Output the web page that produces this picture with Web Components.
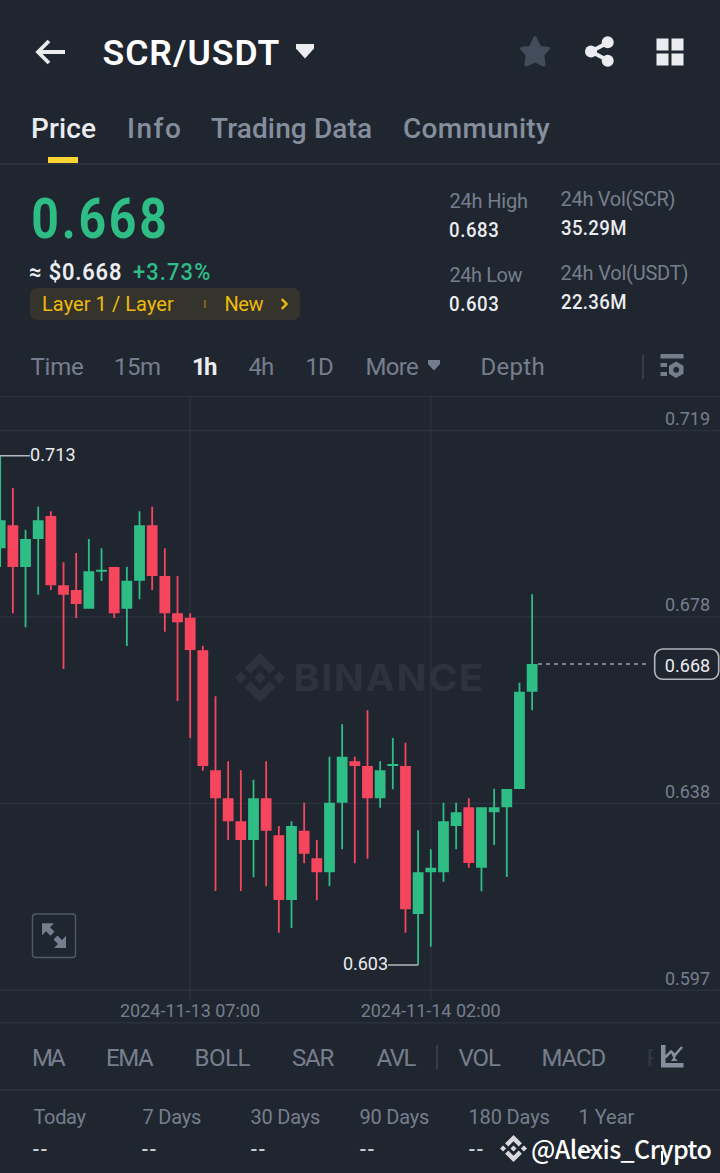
<!DOCTYPE html>
<html lang="en">
<head>
<meta charset="utf-8">
<title>SCR/USDT</title>
<style>
  body {
    margin: 0;
    width: 720px;
    height: 1173px;
    overflow: hidden;
    background: #202630;
    --text: #eaecef;
    --tab: #848e9c;
    --muted: #767e8d;
    --line: #2b303b;
    --up: #2ebd85;
    --down: #f6465d;
    --yellow: #f0b90b;
    font-family: Roboto, "Liberation Sans", sans-serif;
    color: var(--text);
  }
</style>
</head>
<body>
<market-page></market-page>

<script>
const make = (name, html, setup) => {
  const template = document.createElement('template');
  template.innerHTML = html;
  customElements.define(name, class extends HTMLElement {
    constructor() {
      super();
      this.attachShadow({ mode: 'open' });
      this.shadowRoot.appendChild(template.content.cloneNode(true));
    }
    connectedCallback() {
      if (setup) setup(this, this.shadowRoot);
    }
  });
};

// one line of text, tracked so its ink fills the given width
// w: ink width, size, weight, squeeze: horizontal glyph scale, gap: space before
const pen = document.createElement('canvas').getContext('2d');
make('fit-text', `
  <style>
    :host { display: block; flex: none; white-space: nowrap; }
    span { display: inline-block; transform-origin: 0 50%; vertical-align: top; }
  </style>
  <span><slot></slot></span>
`, (el, root) => {
  const w = +el.getAttribute('w');
  const size = +el.getAttribute('size') || 24;
  const weight = el.getAttribute('weight') || 400;
  const squeeze = +el.getAttribute('squeeze') || 1;
  const text = el.textContent;
  const span = root.querySelector('span');
  pen.font = `${weight} ${size}px ${getComputedStyle(el).fontFamily}`;
  const box = pen.measureText(text);
  const ink = box.actualBoundingBoxLeft + box.actualBoundingBoxRight;
  const shift = box.actualBoundingBoxLeft * squeeze;
  el.style.width = `${w}px`;
  el.style.marginLeft = `${el.getAttribute('gap') || 0}px`;
  span.style.fontSize = `${size}px`;
  span.style.fontWeight = weight;
  span.style.letterSpacing = `${(w / squeeze - ink) / (text.length - 1)}px`;
  span.style.transform = `translateX(${shift}px) scaleX(${squeeze})`;
});

make('page-header', `
  <style>
    :host { display: flex; align-items: center; height: 103px; padding: 0 36px 0 35px; }
    svg { display: block; flex: none; }
    fit-text { color: #fff; padding-top: 3px; }
    .icons { margin-left: auto; display: flex; align-items: center; }
  </style>
  <svg width="30" height="26" viewBox="0 0 30 26" fill="none" stroke="#eaecef" stroke-width="3.8"><path d="M30 13H3M14 2 3 13l11 11"/></svg>
  <fit-text w="176" size="35.5" weight="600" gap="38.5">SCR/USDT</fit-text>
  <svg width="18" height="15" viewBox="0 0 18 15" style="margin-left:16.5px" fill="#eaecef"><path d="M0 0h18v4.5L9 14.5 0 4.5z"/></svg>
  <div class="icons">
    <svg width="30" height="31" viewBox="0 0 30 31" fill="#434c5a"><path d="M13.4 1.2q1.600-2 3.200 0l4 8.600 8 1.100q2 .8 1 2.700l-5.200 6 1.200 9.500q-.6 1.900-2.500 1.400L15 26.600l-8.100 3.900q-1.900.5-2.500-1.400l1.200-9.500-5.200-6q-1-1.900 1-2.700l8-1.100z"/></svg>
    <svg width="29" height="31" viewBox="0 0 29 31" style="margin-left:35px" fill="#eaecef"><path d="M23 6.500 6 15.500l17 9" fill="none" stroke="#eaecef" stroke-width="4"/><circle cx="22.700" cy="6.300" r="6"/><circle cx="6" cy="15.500" r="6"/><circle cx="22.700" cy="24.700" r="6"/></svg>
    <svg width="28" height="28" viewBox="0 0 28 28" style="margin-left:42px" fill="#eaecef"><path d="M.5.5h12v12H.5zM15.500.5h12v12h-12zM.5 15.500h12v12H.5zM15.500 15.500h12v12h-12z"/></svg>
  </div>
`);

make('page-tabs', `
  <style>
    :host { display: flex; height: 60px; padding-left: 32px; border-bottom: 2px solid var(--line); color: var(--tab); line-height: 51px; }
    .on { color: var(--text); }
    .on i { display: block; width: 30px; height: 6px; margin: 3px 0 0 16px; background: #fcd535; }
  </style>
  <div class="on"><fit-text w="63" size="28" weight="500" gap="1">Price</fit-text><i></i></div>
  <fit-text w="51" size="28" weight="500" gap="33">Info</fit-text>
  <fit-text w="160" size="28" weight="500" gap="31">Trading Data</fit-text>
  <fit-text w="146" size="28" weight="500" gap="33">Community</fit-text>
`);

make('stat-item', `
  <style>
    :host { display: block; line-height: 29px; height: 58px; margin-bottom: 16px; }
    div { color: var(--muted); }
  </style>
  <div><slot name="label"></slot></div>
  <slot name="value"></slot>
`);

make('price-summary', `
  <style>
    :host { display: flex; height: 173px; box-sizing: border-box; padding: 17px 0 0 30px; }
    .left { width: 419.5px; }
    .price { color: var(--up); line-height: 74px; height: 73px; padding-left: 3px; }
    .fiat { display: flex; height: 31px; line-height: 31px; padding-top: 1.5px; }
    .fiat .up { color: var(--up); }
    .pill { display: flex; align-items: center; box-sizing: border-box; width: 270px; height: 32px; padding: 0 12px 0 13px; line-height: 32px; border-radius: 7px; background: #35342c; color: var(--yellow); }
    .pill i { width: 1.5px; height: 8px; margin-left: 30px; background: #7a6420; }
    .pill svg { margin-left: auto; }
    .col { padding-top: 5px; width: 111px; }
    .col + .col { padding-top: 3px; width: 140px; }
  </style>
  <div class="left">
    <fit-text class="price" w="132" size="56" weight="700" squeeze=".86">0.668</fit-text>
    <div class="fiat">
      <fit-text w="91" size="23.5" weight="600" squeeze=".93">≈ $0.668</fit-text>
      <fit-text class="up" w="77" size="23.5" weight="500" squeeze=".93" gap="12">+3.73%</fit-text>
    </div>
    <div class="pill">
      <fit-text w="131" size="20">Layer 1 / Layer</fit-text>
      <i></i>
      <fit-text w="38" size="20" gap="20">New</fit-text>
      <svg width="7" height="12" viewBox="0 0 7 12" fill="none" stroke="#f0b90b" stroke-width="2.4"><path d="m.8 1 4.800 5-4.800 5"/></svg>
    </div>
  </div>
  <div class="col">
    <stat-item><fit-text slot="label" w="77.5" size="20">24h High</fit-text><fit-text slot="value" w="48.5" size="20" weight="500" squeeze=".93">0.683</fit-text></stat-item>
    <stat-item><fit-text slot="label" w="73" size="20">24h Low</fit-text><fit-text slot="value" w="48.5" size="20" weight="500" squeeze=".93">0.603</fit-text></stat-item>
  </div>
  <div class="col">
    <stat-item><fit-text slot="label" w="114" size="20">24h Vol(SCR)</fit-text><fit-text slot="value" w="65" size="20" weight="500" squeeze=".93">35.29M</fit-text></stat-item>
    <stat-item><fit-text slot="label" w="127" size="20">24h Vol(USDT)</fit-text><fit-text slot="value" w="65" size="20" weight="500" squeeze=".93">22.36M</fit-text></stat-item>
  </div>
`);

make('interval-bar', `
  <style>
    :host { display: flex; align-items: center; height: 58px; padding: 0 36px 0 30.5px; color: var(--muted); }
    .on { color: var(--text); }
    .bar { width: 1.5px; height: 24px; margin-left: auto; background: #373e4a; }
  </style>
  <fit-text w="52.5">Time</fit-text>
  <fit-text w="44" gap="33">15m</fit-text>
  <fit-text class="on" w="24" weight="700" gap="33">1h</fit-text>
  <fit-text w="24.5" gap="31.5">4h</fit-text>
  <fit-text w="25.5" gap="34.5">1D</fit-text>
  <fit-text w="51.5" gap="33.5">More</fit-text>
  <svg width="12" height="14" viewBox="0 0 12 14" style="margin-left:10px" fill="#767e8d"><path d="M0 0h12v4L6 10.500 0 4z"/></svg>
  <fit-text w="62" gap="41.5">Depth</fit-text>
  <div class="bar"></div>
  <svg width="24" height="24" viewBox="0 0 24 24" style="margin-left:16.5px;margin-top:-2px" fill="#767e8d">
    <path d="M.5 0h23v4.500H.5zM.5 9H7v4H.5zM.5 18H7v4H.5z"/>
    <path fill-rule="evenodd" d="M16 7.500 23.500 11.700v8.100L16 24 9 19.800v-8.100zM16.200 12.700a3 3 0 1 0 .01 0z"/>
  </svg>
`);

// [wick top, body top, body bottom, wick bottom, is up]
const candles = [
  [456, 520.3, 548.3, 567, 1], [488, 525.3, 567, 613.3, 0], [529.7, 539, 567, 627.3, 1],
  [506.7, 520.3, 539, 594.7, 1], [511.3, 516, 585.3, 590, 0], [562.3, 585.3, 594.7, 669, 0],
  [553, 590, 604, 618, 0], [539, 571.3, 608.7, 608.7, 1], [548.3, 569.7, 571.7, 581, 1],
  [567, 567, 613.3, 618, 0], [566.7, 580.7, 608.7, 646, 1], [511.3, 525.3, 580.7, 599.3, 1],
  [506.7, 525.3, 576, 590, 0], [548.3, 576, 613.3, 631.7, 0], [576, 613.3, 622.3, 701, 0],
  [613.3, 617.7, 650, 738, 0], [645.7, 650.3, 766, 770.7, 0], [696.3, 770.3, 798.3, 891, 0],
  [761.3, 798.3, 821.3, 840, 0], [770.3, 821.3, 840, 891, 0], [779.7, 798.3, 840, 877.3, 1],
  [761.3, 798.3, 830.7, 886.3, 0], [826, 835.3, 900, 932.7, 0], [821.3, 826, 900, 928, 1],
  [802.7, 830.7, 853.7, 863.3, 0], [840, 858.3, 872.3, 900.3, 0], [756.7, 802.7, 872.3, 886.3, 1],
  [724.3, 756.7, 802.7, 849.3, 1], [756.7, 761.3, 766, 863.3, 0], [710.3, 766, 798.3, 858.7, 0],
  [761.3, 770.3, 798.3, 807.7, 1], [738, 764, 766, 789.3, 1], [742.7, 766, 909.3, 932.7, 0],
  [830.3, 872.3, 914, 965, 1], [849.3, 867.7, 872.3, 946.7, 1], [802.7, 821.3, 872.3, 881.7, 1],
  [802.7, 812.3, 826, 849.3, 1], [798.3, 807.3, 863, 867.7, 0], [807.3, 807.3, 867.7, 891.3, 1],
  [788.7, 807.3, 812.3, 845, 1], [789, 789, 807.3, 877, 1], [682.7, 691.7, 789, 789, 1],
  [594.3, 664, 691.7, 710.3, 1]
];

make('candle-chart', `
  <style>
    :host { display: block; height: 628px; }
    svg { display: block; }
    text { font-size: 18px; fill: var(--muted); }
    .white { fill: var(--text); }
    .grid { stroke: #2b313c; stroke-width: 1.5; }
    .mark { fill: #2e323d; }
    .mark text { font: 700 37px Inter, sans-serif; fill: #2e323d; }
  </style>
  <svg width="720" height="628" viewBox="0 396 720 628">
    <path class="grid" d="M0 396.500h720M0 430.500h720M0 617h720M0 803.600h720M0 990.300h720M190 397v604M430.800 397v604M0 1022.800h720"/>
    <g class="mark">
      <path d="M260 652.500 275.500 668l-5.800 5.700-9.700-9.700-9.700 9.700-5.800-5.700zM260 702.500 275.500 687l-5.800-5.700-9.700 9.700-9.700-9.700-5.800 5.700zM260 671.800l5.700 5.700-5.700 5.700-5.700-5.700zM240.700 671.800l5.700 5.700-5.700 5.700-5.700-5.700zM279.300 671.800l5.700 5.700-5.700 5.700-5.700-5.700z"/>
      <text x="293.500" y="691" textLength="191" lengthAdjust="spacingAndGlyphs" letter-spacing="1.5">BINANCE</text>
    </g>
    <g id="candles"></g>
    <path d="M0 455.700h30M388 965h30" stroke="#b4b7bc" stroke-width="1.5"/>
    <path d="M538 664h109" stroke="#9a9da3" stroke-width="1.6" stroke-dasharray="4 4"/>
    <rect x="654.700" y="649" width="64" height="30.300" rx="8" fill="#202630" stroke="#b1b4ba" stroke-width="1.6"/>
    <text class="white" x="30" y="460.700" textLength="45.500">0.713</text>
    <text class="white" x="343" y="970.300" textLength="45">0.603</text>
    <text class="white" x="664.700" y="671.500" textLength="45.500">0.668</text>
    <text x="665" y="424.500" textLength="45">0.719</text>
    <text x="665" y="611.200" textLength="45">0.678</text>
    <text x="665" y="797.600" textLength="45">0.638</text>
    <text x="665" y="984.600" textLength="45">0.597</text>
    <text x="120" y="1017.200" textLength="140">2024-11-13 07:00</text>
    <text x="360.700" y="1017.200" textLength="140">2024-11-14 02:00</text>
    <rect x="32.500" y="914" width="43" height="43.500" rx="3" fill="none" stroke="#50586a" stroke-width="1.4"/>
    <path d="M42 923.300h12l-4 4 4.500 4.500-4 4-4.500-4.500-4 4zM66 948H54l4-4-4.500-4.500 4-4 4.500 4.500 4-4z" fill="#767e8d"/>
  </svg>
`, (el, root) => {
  root.querySelector('#candles').innerHTML = candles.map(([high, top, bottom, low, up], i) => {
    const x = 0.2 + i * 12.665;
    return `<path fill="var(--${up ? 'up' : 'down'})" d="M${x - 0.9} ${high}h1.8V${low}h-1.8zM${x - 5.4} ${top}h10.8V${bottom}h-10.8z"/>`;
  }).join('');
});

make('indicator-bar', `
  <style>
    :host { display: flex; align-items: center; height: 65px; padding: 0 36px 0 33px; border-bottom: 2px solid var(--line); color: var(--muted); }
    fit-text { padding-top: 3px; }
    .bar { width: 1.5px; height: 24px; margin-left: 19.5px; background: #373e4a; }
    .faded { width: 6px; margin-left: 41px; overflow: hidden; padding-top: 3px; font-size: 24px; color: #323843; }
    svg { margin-left: auto; }
  </style>
  <fit-text w="33">MA</fit-text>
  <fit-text w="47" gap="41">EMA</fit-text>
  <fit-text w="55" gap="41.5">BOLL</fit-text>
  <fit-text w="42.5" gap="41.5">SAR</fit-text>
  <fit-text w="40" gap="42">AVL</fit-text>
  <div class="bar"></div>
  <fit-text w="42.5" gap="21">VOL</fit-text>
  <fit-text w="63" gap="41.5">MACD</fit-text>
  <div class="faded">R</div>
  <svg width="23" height="23" viewBox="0 0 23 23" fill="#848e9c">
    <path d="M0 0h4.500v18H22.500v4.500H0z"/>
    <path d="M4 12.500 10 6.500l4 3.500L21 2" fill="none" stroke="#848e9c" stroke-width="2.6"/>
    <path d="M10.500 9h5l-1.500 4 2.800 3h-7l2.500-3z"/>
  </svg>
`);

make('returns-table', `
  <style>
    :host { display: flex; padding: 11px 0 0 32.5px; color: var(--muted); }
    div { width: 109px; line-height: 30px; }
    .v { color: #c9ccd1; line-height: 35px; }
  </style>
  <div><fit-text w="53" size="20" gap="1">Today</fit-text><fit-text class="v" w="14" size="20" weight="500">--</fit-text></div>
  <div><fit-text w="58.5" size="20" gap="1">7 Days</fit-text><fit-text class="v" w="14" size="20" weight="500">--</fit-text></div>
  <div><fit-text w="69.5" size="20">30 Days</fit-text><fit-text class="v" w="14" size="20" weight="500">--</fit-text></div>
  <div><fit-text w="69.5" size="20">90 Days</fit-text><fit-text class="v" w="14" size="20" weight="500">--</fit-text></div>
  <div><fit-text w="80" size="20" gap="1">180 Days</fit-text><fit-text class="v" w="14" size="20" weight="500">--</fit-text></div>
  <div><fit-text w="55" size="20" gap="2">1 Year</fit-text><fit-text class="v" w="14" size="20" weight="500" gap="1">--</fit-text></div>
`);

// author stamp, sits over the last table row
make('author-stamp', `
  <style>
    :host { position: absolute; left: 500px; top: 1129px; display: flex; align-items: center; height: 38px; color: #fff; font-family: "Noto Sans CJK SC", sans-serif; line-height: 38px; }
    svg { margin-top: 1px; }
    i { position: absolute; left: 161px; top: 22px; width: 2px; height: 12px; background: #fff; }
  </style>
  <svg width="27" height="27" viewBox="235 652.500 50 50" fill="#d8d9db"><path d="M260 652.500 275.500 668l-5.800 5.700-9.700-9.700-9.700 9.700-5.800-5.700zM260 702.500 275.500 687l-5.800-5.700-9.700 9.700-9.700-9.700-5.800 5.700zM260 671.800l5.700 5.700-5.700 5.700-5.700-5.700zM240.700 671.800l5.700 5.700-5.700 5.700-5.700-5.700zM279.300 671.800l5.700 5.700-5.700 5.700-5.700-5.700z"/></svg>
  <fit-text w="179.5" size="25" weight="500" gap="5">@Alexis_Crypto</fit-text>
  <i></i>
`);

make('market-page', `
  <style>:host { display: block; }</style>
  <page-header></page-header>
  <page-tabs></page-tabs>
  <price-summary></price-summary>
  <interval-bar></interval-bar>
  <candle-chart></candle-chart>
  <indicator-bar></indicator-bar>
  <returns-table></returns-table>
  <author-stamp></author-stamp>
`);
</script>
</body>
</html>
